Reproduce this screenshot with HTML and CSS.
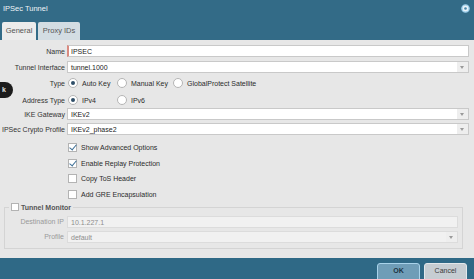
FILE: index.html
```html
<!DOCTYPE html>
<html lang="en">
<head>
  <meta charset="UTF-8" />
  <title>IPSec Tunnel</title>
  <link rel="stylesheet" href="styles.css">
</head>
<body>

  <div class="dialog">
    <div class="header">
      <div class="title-row">
        <span class="title">IPSec Tunnel</span>
        <svg class="help" width="9" height="9" viewBox="0 0 9 9">
          <circle cx="4.5" cy="4.5" r="3.6" fill="#e8f3fa" stroke="#9fd0ec" stroke-width="1.4"/>
          <circle cx="4.5" cy="4.5" r="1.3" fill="#4a86a8"/>
        </svg>
      </div>
      <div class="tabs">
        <div class="tab active">General</div>
        <div class="tab">Proxy IDs</div>
      </div>
    </div>

    <div class="body">
      <div class="row">
        <label class="label">Name</label>
        <div class="input required">IPSEC</div>
      </div>
      <div class="row">
        <label class="label">Tunnel Interface</label>
        <div class="input select">tunnel.1000<span class="arrow"></span></div>
      </div>

      <div class="row radio-row first">
        <label class="label">Type</label>
        <div class="options">
          <span class="opt"><span class="radio on"></span>Auto Key</span>
          <span class="opt"><span class="radio"></span>Manual Key</span>
          <span class="opt"><span class="radio"></span>GlobalProtect Satellite</span>
        </div>
      </div>
      <div class="row radio-row">
        <label class="label">Address Type</label>
        <div class="options">
          <span class="opt"><span class="radio on"></span>IPv4</span>
          <span class="opt"><span class="radio"></span>IPv6</span>
        </div>
      </div>

      <div class="row spaced">
        <label class="label">IKE Gateway</label>
        <div class="input select">IKEv2<span class="arrow"></span></div>
      </div>
      <div class="row spaced">
        <label class="label">IPSec Crypto Profile</label>
        <div class="input select">IKEv2_phase2<span class="arrow"></span></div>
      </div>

      <div class="checks">
        <div class="check-row"><span class="box on"></span>Show Advanced Options</div>
        <div class="check-row"><span class="box on"></span>Enable Replay Protection</div>
        <div class="check-row"><span class="box"></span>Copy ToS Header</div>
        <div class="check-row"><span class="box"></span>Add GRE Encapsulation</div>
      </div>

      <fieldset class="monitor">
        <legend><span class="box"></span>Tunnel Monitor</legend>
        <div class="row inner">
          <label class="label dim">Destination IP</label>
          <div class="input disabled">10.1.227.1</div>
        </div>
        <div class="row inner">
          <label class="label dim">Profile</label>
          <div class="input disabled select">default<span class="arrow"></span></div>
        </div>
      </fieldset>
    </div>

    <div class="footer">
      <button class="btn ok">OK</button>
      <button class="btn cancel">Cancel</button>
    </div>

    <!-- floating bubble over the left edge -->
    <div class="bubble">k</div>
  </div>

</body>
</html>
```

FILE: styles.css
```css
body {
  margin: 0;
  font-family: 'Liberation Sans', Arial, sans-serif;
  font-size: 7px;
  color: #2b2b2b;
}

.dialog {
  position: relative;
  width: 474px;
  height: 279px;
  overflow: hidden;
  background: #e7e7e7;
  display: flex;
  flex-direction: column;
}

.header {
  background: #336b87;
  height: 40px;
  display: flex;
  flex-direction: column;
}

.title-row {
  height: 22px;
  display: flex;
  justify-content: space-between;
  padding: 4px 4px 0 3px;
  box-sizing: border-box;
}

.title {
  color: #eef4f7;
  font-size: 7.5px;
  line-height: 10px;
}

.tabs {
  display: flex;
  gap: 2px;
  padding-left: 2px;
  align-items: flex-end;
  flex: 1;
}

.tab {
  height: 18px;
  line-height: 18px;
  font-size: 7.5px;
  color: #555;
  background: #d3dde3;
  border-radius: 2px 2px 0 0;
  width: 42px;
  text-align: center;
  white-space: nowrap;
}

.tab.active {
  background: #ececec;
  width: 34px;
}

.body {
  flex: 1;
  padding: 5px 5px 0 0;
}

.row {
  display: flex;
  align-items: center;
  gap: 2px;
  height: 12px;
  margin-bottom: 4px;
}

.row.spaced {
  margin-bottom: 3px;
}

.label {
  width: 65px;
  text-align: right;
  color: #333;
  flex-shrink: 0;
  white-space: nowrap;
}

.label.dim {
  width: 59px;
  color: #9a9a9a;
}

.input {
  position: relative;
  flex: 1;
  height: 12px;
  line-height: 11px;
  background: #fff;
  border: 1px solid #c9c9c9;
  box-sizing: border-box;
  padding-left: 3px;
  color: #222;
}

.input.required {
  border-left: 2px solid #d98a80;
  padding-left: 2px;
}

.input.disabled {
  background: #f1f1f1;
  border-color: #dcdcdc;
  color: #8d8d8d;
}

.arrow {
  position: absolute;
  top: 0;
  right: 0;
  width: 11px;
  height: 100%;
  background: #eeeeee;
}

.arrow::after {
  content: "";
  position: absolute;
  left: 3px;
  top: 4px;
  border-left: 2.5px solid transparent;
  border-right: 2.5px solid transparent;
  border-top: 3px solid #9a9a9a;
}

.radio-row {
  height: 16px;
  margin: 0;
}

.radio-row.first {
  height: 18px;
  margin-top: -3px;
}

.options {
  display: grid;
  grid-template-columns: 49px 56px auto;
  align-items: center;
}

.opt {
  display: flex;
  align-items: center;
  gap: 4px;
}

.radio {
  width: 8px;
  height: 8px;
  border-radius: 50%;
  background: #fff;
  border: 1px solid #b5b5b5;
  position: relative;
  margin-left: 1px;
}

.radio.on::after {
  content: "";
  position: absolute;
  left: 2px;
  top: 2px;
  width: 4px;
  height: 4px;
  border-radius: 50%;
  background: #2f4e68;
}

.checks {
  padding-left: 68px;
  padding-top: 2px;
}

.check-row {
  display: flex;
  align-items: center;
  gap: 4px;
  height: 15.5px;
}

.box {
  width: 9px;
  height: 9px;
  background: #fff;
  border: 1px solid #b3b3b3;
  box-sizing: border-box;
  position: relative;
  flex-shrink: 0;
}

.box.on::after {
  content: "";
  position: absolute;
  left: 2px;
  top: -1px;
  width: 3px;
  height: 6px;
  border-right: 1.6px solid #3d6f97;
  border-bottom: 1.6px solid #3d6f97;
  transform: rotate(40deg);
}

.monitor {
  margin: 0 6px 0 4px;
  padding: 4px 4px 6px 0;
  border: 1px solid #d4d4d4;
  min-width: 0;
}

.monitor legend {
  display: flex;
  align-items: center;
  gap: 2px;
  padding: 0 2px;
  margin-left: 4px;
  font-weight: bold;
  color: #555;
  height: 10px;
}

.monitor legend .box {
  width: 8px;
  height: 8px;
}

.row.inner {
  height: 11px;
  margin-bottom: 4px;
  gap: 3px;
}

.row.inner:last-child {
  margin-bottom: 0;
}

.footer {
  height: 21px;
  background: #2f6986;
  display: flex;
  justify-content: flex-end;
  align-items: flex-start;
  gap: 4px;
  padding: 5px 7px 0 0;
  box-sizing: border-box;
}

.btn {
  height: 20px;
  width: 43px;
  font-family: 'Liberation Sans', Arial, sans-serif;
  font-size: 7px;
  border-radius: 3px 3px 0 0;
  padding: 0 0 6px;
  cursor: pointer;
}

.btn.ok {
  background: #6f9db7;
  border: 1px solid #a9d3ea;
  color: #1d3442;
  font-weight: bold;
}

.btn.cancel {
  background: #c6cdd2;
  border: 1px solid #e3e8eb;
  color: #3a3a3a;
}

.bubble {
  position: absolute;
  left: -8px;
  top: 82px;
  width: 21px;
  height: 16px;
  border-radius: 8px;
  background: #1c1c1c;
  color: #e0e0e0;
  font-weight: bold;
  font-size: 7px;
  line-height: 16px;
  text-align: right;
  padding-right: 7px;
  box-sizing: border-box;
}
```
